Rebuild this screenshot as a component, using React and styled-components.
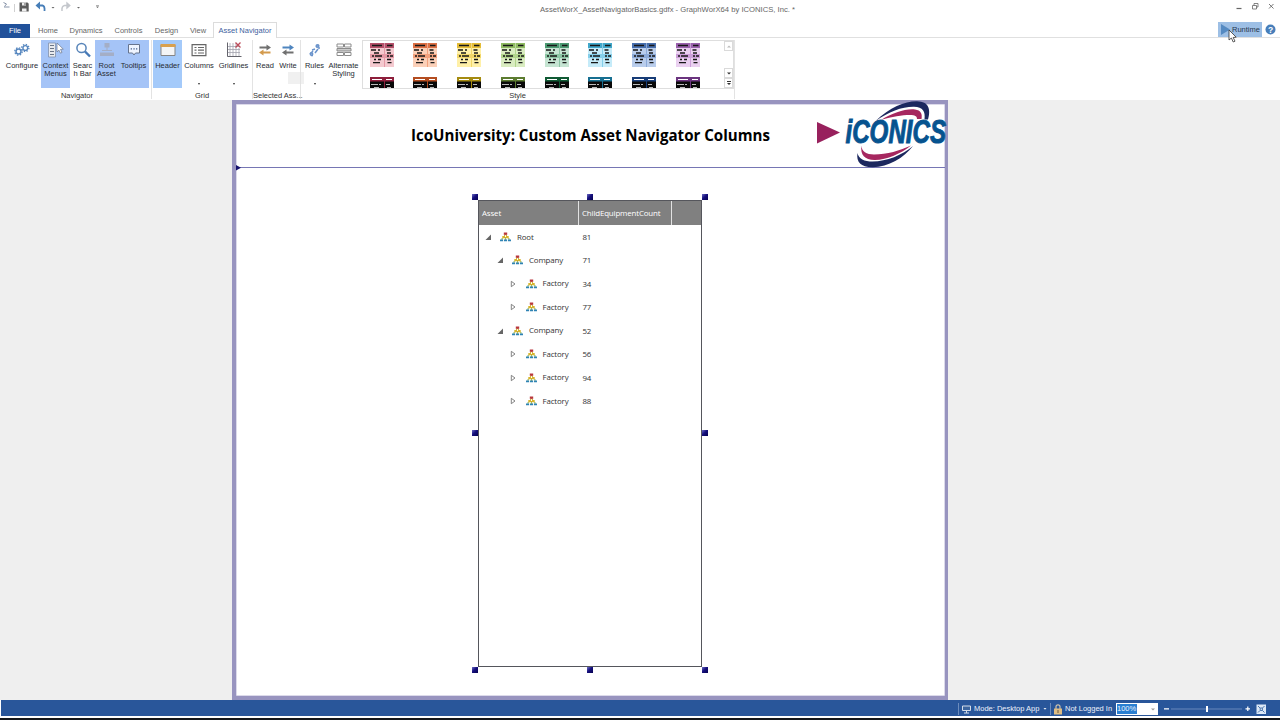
import React from "react";
import styled, { createGlobalStyle } from "styled-components";

const GlobalStyle = createGlobalStyle`
  * {
    box-sizing: border-box;
  }
  body {
    margin: 0;
    overflow: hidden;
    font-family: "Liberation Sans", Arial, sans-serif;
    font-size: 7.5px;
    color: #333;
  }
  svg {
    display: block;
    flex: none;
  }
`

const Window = styled.div`
  position: relative;
  width: 1280px;
  height: 720px;
  display: flex;
  flex-direction: column;
  background: #fff;
  border-bottom: 2px solid #15171b;
`

const TitleBar = styled.header`
  height: 22px;
  display: grid;
  grid-template-columns: 540px 1fr 48px;
`
const QuickAccess = styled.div`
  height: 14px;
`
const WindowTitle = styled.div`
  font-size: 7.67px;
  line-height: 19px;
  color: #666;
  white-space: nowrap;
`
const WindowButtons = styled.div`
  height: 14px;
`

const TabRow = styled.nav`
  height: 16px;
  display: flex;
  border-bottom: 1px solid #e0e0e0;
  line-height: 17px;
  white-space: nowrap;
`
const FileTab = styled.div`
  width: 30px;
  height: 14px;
  margin-top: 2px;
  background: #21519a;
  color: #fff;
  text-align: center;
  line-height: 14px;
`
const Tab = styled.div`
  width: ${({ $w }) => $w}px;
  text-align: center;
  color: #666;
`
const ActiveTab = styled(Tab)`
  height: 16px;
  margin-left: -1px;
  color: #3e62a0;
  background: #fff;
  border: 1px solid #dcdcdc;
  border-bottom: 0;
  line-height: 15px;
`
const RuntimeArea = styled.div`
  margin-left: auto;
  display: flex;
  gap: 3px;
  padding-right: 4px;
`
const RuntimeButton = styled.div`
  width: 44px;
  height: 15px;
  display: flex;
  align-items: center;
  gap: 2px;
  padding-left: 3px;
  background: #9dbfe5;
  color: #26364d;
  line-height: 15px;
`

const Ribbon = styled.section`
  height: 62px;
  display: flex;
  padding-top: 2px;
`
const Group = styled.div`
  width: ${({ $w }) => $w}px;
  height: 59px;
  border-right: 1px solid #e3e3e3;
  display: flex;
  flex-direction: column;
`
const GroupBody = styled.div`
  height: 48px;
  display: flex;
  padding-left: ${({ $pad }) => $pad || 0}px;
`
const GroupLabel = styled.div`
  margin-top: 3px;
  padding-left: ${({ $shift }) => $shift || 0}px;
  text-align: center;
  line-height: 10px;
  color: #333;
  white-space: nowrap;
`
const RibbonButton = styled.div`
  position: relative;
  width: ${({ $w }) => $w}px;
  height: 48px;
  flex: none;
  padding-top: 1px;
  display: flex;
  flex-direction: column;
  align-items: center;
  background: ${({ $on }) => $on || "transparent"};
`
const ButtonLabel = styled.div`
  margin-top: 3px;
  line-height: 8px;
  text-align: center;
  white-space: pre;
  color: #282c34;
`
const DropMark = styled.i`
  width: 0;
  margin-top: auto;
  margin-bottom: 3px;
  border: 1.5px solid transparent;
  border-top: 2px solid #333;
  border-bottom: 0;
`

const Gallery = styled.div`
  width: 372px;
  height: 49px;
  display: flex;
  border: 1px solid #dedede;
  overflow: hidden;
`
const Tiles = styled.div`
  width: 362px;
  height: 47px;
  display: grid;
  grid-template-columns: repeat(8, 43.75px);
  grid-template-rows: 34px 12px;
  padding: 2px 0 0 6.5px;
`
const ScrollColumn = styled.div`
  width: 9px;
  display: flex;
  flex-direction: column;
  justify-content: space-between;
`
const ScrollButton = styled.div`
  height: 10px;
  margin-top: ${({ $push }) => ($push ? "auto" : 0)};
  border: 1px solid #dadada;
  display: flex;
  align-items: center;
  justify-content: center;
`

const Workspace = styled.main`
  height: 600px;
  display: flex;
  padding-left: 232px;
  background: #efefef;
`
const Page = styled.div`
  position: relative;
  width: 716px;
  height: 600px;
  background: #fff;
  border: 4px solid #9894bf;
  border-right-width: 3px;
  box-shadow: inset 0 0 0 0.5px #b9b6d6;
`
const PageHeader = styled.div`
  height: 64px;
  border-bottom: 1px solid #7676b4;
  text-align: center;
  font: bold 15.1px/62px "Open Sans", "Noto Sans", sans-serif;
  color: #000;
`
const Logo = styled.svg`
  position: absolute;
  left: 576px;
  top: -7px;
  overflow: visible;
`
const LineStart = styled.svg`
  position: absolute;
  left: -1px;
  top: 60px;
`
const Navigator = styled.div`
  position: relative;
  width: 224px;
  height: 467px;
  margin: 32px 0 0 242px;
  border: 1px solid #55565c;
  font-family: "Open Sans", "Noto Sans", sans-serif;
  font-size: 7.9px;
  letter-spacing: -0.14px;
`
const HeaderRow = styled.div`
  height: 24px;
  display: grid;
  grid-template-columns: 100px 93px 1fr;
  background: #808080;
  line-height: 24px;
  color: #fff;
`
const HeaderCell = styled.div`
  padding-left: 3px;
  border-right: ${({ $last }) => ($last ? "0" : "1px solid #e2e2e2")};
`
const Row = styled.div`
  height: 23.48px;
  display: grid;
  grid-template-columns: 103.5px 1fr;
  line-height: 25px;
`
const TreeCell = styled.div`
  height: 24px;
  display: flex;
  align-items: center;
  padding-left: ${({ $level }) => [6, 18, 31][$level]}px;
`
const NodeIcon = styled.div`
  margin: 0 ${({ $level }) => [6, 6, 5.5][$level]}px 0 ${({ $level }) => [8, 8, 9][$level]}px;
`
const Handle = styled.i`
  position: absolute;
  left: ${({ $x }) => $x}px;
  top: ${({ $y }) => $y}px;
  width: 6px;
  height: 6px;
  background: linear-gradient(135deg, #6f6fc4 0%, #16107e 45%, #05004f 100%);
`

const StatusBar = styled.footer`
  height: 16px;
  margin-left: 1px;
  display: flex;
  align-items: center;
  padding: 2px 0 0 957px;
  background: #29569a;
  color: #edf2fa;
  line-height: 16px;
  white-space: nowrap;
`
const StatusItem = styled.div`
  width: ${({ $w }) => $w}px;
  height: 12px;
  display: flex;
  align-items: center;
  gap: 3px;
  padding-left: 3px;
  border-left: 1px solid #6c8cbd;
`
const ZoomBox = styled.div`
  width: 42px;
  height: 12px;
  display: flex;
  align-items: center;
  justify-content: space-between;
  padding: 0 3px 0 1px;
  background: #fff;
`
const ZoomValue = styled.span`
  height: 10px;
  width: 20px;
  line-height: 10px;
  background: #2a7fd2;
`
const SliderArea = styled.div`
  margin-left: 4px;
`
const Cursor = styled.svg`
  position: absolute;
  left: 1228px;
  top: 29px;
`
const Shade = styled.div`
  position: absolute;
  left: 288px;
  top: 72px;
  width: 16px;
  height: 12px;
  background: rgba(225, 225, 225, 0.5);
`

const palettes = [
  ["#b5506a", "#f4c9cf", "#e59aa6"],
  ["#dd7044", "#fbd0b8", "#f2a27e"],
  ["#e5bd38", "#fff0a8", "#f2d76a"],
  ["#8fbb62", "#d9ecc0", "#b1d48c"],
  ["#4b9a72", "#c5e4d2", "#8cc5a4"],
  ["#40a7ca", "#c5ebf9", "#85cfea"],
  ["#476fae", "#b9cdec", "#8caad8"],
  ["#9b62ae", "#ead0f0", "#cda0da"],
]
const darkHeads = ["#8e1f3c", "#b44d20", "#a58b10", "#5c7c30", "#105a34", "#176f91", "#173c77", "#6b347f"]

const rows = [
  { level: 0, name: "Root", count: 81, open: true },
  { level: 1, name: "Company", count: 71, open: true },
  { level: 2, name: "Factory", count: 34 },
  { level: 2, name: "Factory", count: 77 },
  { level: 1, name: "Company", count: 52, open: true },
  { level: 2, name: "Factory", count: 56 },
  { level: 2, name: "Factory", count: 94 },
  { level: 2, name: "Factory", count: 88 },
]

function LightTile({ colors: [head, body, band] }) {
  return (
    <svg width="24" height="24" viewBox="0 0 24 24">
      <path fill={body} d="M0 0h24v24H0z" />
      <path fill={head} d="M0 0h24v5H0z" />
      <path fill={band} d="M0 11h24v4H0zM14 5h1v19h-1z" />
      <path fill="#fff" opacity=".4" d="M14 0h1v5h-1z" />
      <path
        stroke="#171717"
        strokeWidth="1.300"
        d="M2 2.500h10M17 2.500h5.500M1 7h5M8 7h2M16.500 7h4M4 10h5M17 10h4M2 13h2M5 13h7M17 13h2M20 13h3M4 16.500h2M8 16.500h3M17 16.500h4M3 19.700h7M17.500 19.700h4"
      />
    </svg>
  )
}

function DarkTile({ head }) {
  return (
    <svg width="24" height="12" viewBox="0 0 24 12">
      <path fill="#090909" d="M0 0h24v12H0z" />
      <path fill={head} d="M0 0h24v4.500H0z" />
      <path stroke="#fff" strokeWidth="1.200" d="M2 2.500h10M16 2.500h6" />
      <path stroke="#bbb" strokeWidth="1" d="M1 7.500h7M9 7.500h2M16 7.500h4M4 10.500h5M17 10.500h4" />
      <path stroke={head} d="M14.500 0v12" />
    </svg>
  )
}

function TreeIcon() {
  return (
    <svg width="11" height="10" viewBox="0 0 11 10">
      <path stroke="#cfa92f" strokeWidth="1" fill="none" d="M5.500 2 2.500 7M5.500 2l3 5M5.500 5v3" />
      <path fill="#b8373e" d="M3.800 .5h3.400v2.300H3.800z" />
      <path fill="#d8b62c" d="M2.300 4h2.700v2H2.300zM6 4h2.700v2H6z" />
      <path fill="#8fbf77" d="M1 6.500h2v1H1zM4.500 6.500h2v1h-2zM8 6.500h2v1H8z" />
      <path fill="#2f83b4" d="M0 7.400h3.100v1.800H0zM4 7.400h3v1.800H4zM7.900 7.400H11v1.800H7.900z" />
    </svg>
  )
}

function Expander({ open }) {
  return (
    <svg width="7" height="8" viewBox="0 0 7 8">
      {open
        ? <path fill="#666" d="M6 1.500v5.500H.5z" />
        : <path fill="#fff" stroke="#777" strokeWidth=".9" d="M1.300 1.300v5.400L5 4z" />}
    </svg>
  )
}

// drawings of the ribbon buttons, all on an 18 x 18 grid
const icons = {
  configure: (
    <g fill="none" stroke="#5787bf">
      <circle cx="5.500" cy="10.500" r="2.500" strokeWidth="1.500" />
      <circle cx="5.500" cy="10.500" r="3.700" strokeWidth="1.300" strokeDasharray="1.450 1.450" />
      <circle cx="12.300" cy="7" r="2.400" strokeWidth="1.400" />
      <circle cx="12.300" cy="7" r="3.600" strokeWidth="1.300" strokeDasharray="1.410 1.410" />
    </g>
  ),
  context: (
    <g>
      <path fill="#e8eaee" stroke="#8292ad" strokeWidth=".8" d="M1.500 2h7v14h-7z" />
      <path stroke="#6b7587" strokeWidth="1" d="M3 4.500h4M3 7.500h4M3 10.500h4M3 13.500h4" />
      <path fill="#fff" stroke="#68748a" strokeWidth=".7" d="M10 2v9l2-1.800 1.500 3 1.500-.8-1.500-3 2.800-.3z" />
    </g>
  ),
  search: (
    <g fill="none" stroke="#4679b6">
      <circle cx="7.500" cy="7" r="4.600" stroke="#5784b9" strokeWidth="1.500" />
      <path strokeWidth="2.400" d="m11 10.500 5 5" />
    </g>
  ),
  root: (
    <g fill="#a4aec6">
      <path d="M6.500 2h5v4.500h-5zM8.500 6.500h1v3h-1zM4 9h10v1H4z" />
      <path d="M2 11.500h14v3.500H2z" />
    </g>
  ),
  tooltip: (
    <g>
      <path fill="#eef4ff" stroke="#66748e" strokeWidth="1" d="M3.500 3.500h11v8.500h-4l-1.500 2-1.500-2h-4z" />
      <path fill="#46618f" d="M5.700 7.200H7v1.300H5.700zM8.400 7.200h1.300v1.300H8.400zM11 7.200h1.300v1.300H11z" />
    </g>
  ),
  header: (
    <g>
      <path fill="#f4f5f6" stroke="#858585" strokeWidth="1" d="M2 4h14v10.500H2z" />
      <path fill="#d9a04e" d="M1.500 3h15v3h-15z" />
    </g>
  ),
  columns: (
    <g>
      <path fill="#fff" stroke="#666" strokeWidth="1.200" d="M2.100 3.600h13.800v11H2.100z" />
      <path stroke="#666" strokeWidth="1.200" d="M4.500 6.500h2M8 6.500h6M4.500 9.200h2M8 9.200h6M4.500 12h2M8 12h6" />
    </g>
  ),
  gridlines: (
    <g>
      <path stroke="#a2a2ad" strokeWidth=".8" d="M5 2v13M8 2v13M11 2v13M14 7v8M2 5.500h13M2 8.500h13M2 11.500h13" />
      <path fill="none" stroke="#64646c" strokeWidth="1" d="M2.500 1.500v14h14" />
      <path stroke="#bd4b59" strokeWidth="1.300" d="m10.500 1.500 5 5M15.500 1.500l-5 5" />
    </g>
  ),
  read: (
    <g>
      <path fill="#707070" d="M3.500 5.500h7V3.500l4.500 3-4.500 3V7.500h-7z" />
      <path fill="#d39a4d" d="M14.500 10.500h-7v-2l-4.500 3 4.500 3v-2h7z" />
    </g>
  ),
  write: (
    <g>
      <path fill="#4f85bf" d="M3.500 5.500h7V3.500l4.500 3-4.500 3V7.500h-7z" />
      <path fill="#707070" d="M14.500 10.500h-7v-2l-4.500 3 4.500 3v-2h7z" />
    </g>
  ),
  rules: (
    <g fill="none" stroke="#6a93cb" strokeWidth="1.500">
      <path d="m10 6 3-2M6 9l3-1M4 13l3-3M9 12l3-4M12 7h2M5 14.500h2" />
      <circle cx="11.500" cy="5" r="1.300" />
      <circle cx="5.500" cy="13" r="1.200" />
    </g>
  ),
  alternate: (
    <g fill="#fff" stroke="#8c8c8c" strokeWidth="1">
      <path d="M2 3h6.500v3H2zM9.500 3H16v3H9.500zM2 11.500h6.500v3H2zM9.500 11.500H16v3H9.500z" />
      <path fill="#ccc" d="M2 7.500h14v2.500H2z" />
    </g>
  ),
}

function Command({ icon, w, on, label, drop }) {
  return (
    <RibbonButton $w={w} $on={on}>
      <svg width="18" height="18" viewBox="0 0 18 18">{icons[icon]}</svg>
      <ButtonLabel>{label}</ButtonLabel>
      {drop && <DropMark />}
    </RibbonButton>
  )
}

function TitleArea() {
  return (
    <TitleBar>
      <QuickAccess>
        <svg width="110" height="14" viewBox="0 0 110 14">
          <path fill="none" stroke="#8793a8" strokeWidth="1" d="m3.500 2.500 3 1.500-2 2.500M4 7h5.500" />
          <path stroke="#d0d0d0" d="M14.500 4v8" />
          <path fill="#5a5a5a" d="M19.500 2.500h8l1.200 1.200V11.500h-9.200z" />
          <path fill="#eee" d="M22 2.500h4v3h-4zM22 8.500h4.500v3H22z" />
          <path fill="#5a5a5a" d="M24.500 3h1v2h-1z" />
          <path fill="none" stroke="#477eb8" strokeWidth="1.800" d="M38 5.500h4.500q2.500.5 2 5.500" />
          <path fill="#477eb8" d="m35.500 5.500 4.500-4v8z" />
          <path fill="#666" d="M51.500 7h3L53 8.500zM77 7h3l-1.500 1.500zM96 6.500h3L97.500 8zM96 5h3v.6h-3z" />
          <path fill="none" stroke="#c4c7cc" strokeWidth="1.500" d="M62 11q-.5-5 2.500-5.500H68" />
          <path fill="#c4c7cc" d="m70.800 5.500-4.500-4v8z" />
        </svg>
      </QuickAccess>
      <WindowTitle>AssetWorX_AssetNavigatorBasics.gdfx - GraphWorX64 by ICONICS, Inc. *</WindowTitle>
      <WindowButtons>
        <svg width="48" height="14" viewBox="0 0 48 14" fill="none" stroke="#666">
          <path strokeWidth="1.200" d="M4.500 8.500h5" />
          <path strokeWidth=".8" d="M20.500 5.500h4v3.500h-4zM22 5.500V3.500h4v3.500h-1.500" />
          <path strokeWidth=".9" d="m37 4 4.500 4.500M41.500 4 37 8.500" />
        </svg>
      </WindowButtons>
    </TitleBar>
  )
}

function Tabs() {
  return (
    <TabRow>
      <FileTab>File</FileTab>
      <Tab $w={36}>Home</Tab>
      <Tab $w={40}>Dynamics</Tab>
      <Tab $w={45}>Controls</Tab>
      <Tab $w={31}>Design</Tab>
      <Tab $w={32}>View</Tab>
      <ActiveTab $w={64}>Asset Navigator</ActiveTab>
      <RuntimeArea>
        <RuntimeButton>
          <svg width="9" height="11" viewBox="0 0 9 11"><path fill="#558ac2" d="M0 0v11l9-5.500z" /></svg>
          Runtime
        </RuntimeButton>
        <svg width="11" height="14" viewBox="0 0 11 14">
          <circle cx="5.500" cy="7.500" r="5" fill="#477eba" />
          <text x="5.500" y="10.500" textAnchor="middle" fontSize="8.500" fontWeight="bold" fill="#fff">?</text>
        </svg>
      </RuntimeArea>
    </TabRow>
  )
}

function RibbonArea() {
  return (
    <Ribbon>
      <Group $w={152}>
        <GroupBody $pad={3}>
          <Command w={38} icon="configure" label="Configure" />
          <Command w={29} on="#a5c4f7" icon="context" label={"Context\nMenus"} />
          <Command w={25} icon="search" label={"Searc\nh Bar"} />
          <Command w={23} on="#a5c4f7" icon="root" label={"Root\nAsset"} />
          <Command w={31} on="#a5c4f7" icon="tooltip" label="Tooltips" />
        </GroupBody>
        <GroupLabel $shift={3}>Navigator</GroupLabel>
      </Group>
      <Group $w={101}>
        <GroupBody $pad={1}>
          <Command w={29} on="#a4cafa" icon="header" label="Header" />
          <Command w={34} icon="columns" label="Columns" drop />
          <Command w={35} icon="gridlines" label="Gridlines" drop />
        </GroupBody>
        <GroupLabel>Grid</GroupLabel>
      </Group>
      <Group $w={48}>
        <GroupBody>
          <Command w={24} icon="read" label="Read" />
          <Command w={22} icon="write" label="Write" />
        </GroupBody>
        <GroupLabel>Selected Ass...</GroupLabel>
      </Group>
      <Group $w={434}>
        <GroupBody $pad={3}>
          <Command w={21} icon="rules" label="Rules" drop />
          <Command w={37} icon="alternate" label={"Alternate\nStyling"} />
          <Gallery>
            <Tiles>
              {palettes.map((colors) => <LightTile key={colors[0]} colors={colors} />)}
              {darkHeads.map((head) => <DarkTile key={head} head={head} />)}
            </Tiles>
            <ScrollColumn>
              <ScrollButton><svg width="4" height="3"><path fill="#bbb" d="M0 2.500h4L2 .5z" /></svg></ScrollButton>
              <ScrollButton $push><svg width="4" height="3"><path fill="#333" d="M0 .5h4L2 2.500z" /></svg></ScrollButton>
              <ScrollButton><svg width="4" height="5"><path fill="#333" d="M0 0h4v1H0zM0 2h4L2 4z" /></svg></ScrollButton>
            </ScrollColumn>
          </Gallery>
        </GroupBody>
        <GroupLabel>Style</GroupLabel>
      </Group>
    </Ribbon>
  )
}

function IconicsLogo() {
  return (
    <Logo width="136" height="72" viewBox="812 97 136 72">
      <path fill="#98215d" d="M817 122v21.500l23-11z" />
      <path fill="#1c285f" d="M875.500 121C890 107 905 101 917 101.200c12 .3 14 8.300 11 18.300h-3.500c1-8-1.500-12.500-10.500-12.700-12-.2-25 5-38.500 14.200z" />
      <path fill="#a6275f" d="M881 120c12-7 24-11.500 34-10.500 6 .8 7.500 4.500 6.500 9.500h-4.500c0-3-2-4-7-4-8 0-18 1.500-29 5z" />
      <path fill="#a6275f" d="M861.500 145.500c0 6 5 9 12.500 9 13 0 26-4 37-9-10 8-24 14.500-36 14.500-10 .2-15-5-13.500-14.500z" />
      <path fill="#1c285f" d="M857.500 153c1 6 7 8.500 15 8.500 14 0 30-6.500 40.500-15.500-9 12-25 21-40 21.300-12 .2-17-5.300-15.500-14.300z" />
      <text
        x="845.500"
        y="142.800"
        textLength="100.500"
        lengthAdjust="spacingAndGlyphs"
        fontFamily="Liberation Sans, Arial, sans-serif"
        fontSize="34"
        fontWeight="bold"
        fontStyle="italic"
        fill="#06538f"
        stroke="#06538f"
        strokeWidth="1"
      >
        iCONICS
      </text>
    </Logo>
  )
}

function AssetNavigator() {
  return (
    <Navigator>
      <HeaderRow>
        <HeaderCell>Asset</HeaderCell>
        <HeaderCell>ChildEquipmentCount</HeaderCell>
        <HeaderCell $last />
      </HeaderRow>
      {rows.map((row, i) => (
        <Row key={i}>
          <TreeCell $level={row.level}>
            <Expander open={row.open} />
            <NodeIcon $level={row.level}><TreeIcon /></NodeIcon>
            {row.name}
          </TreeCell>
          <div>{row.count}</div>
        </Row>
      ))}
      {[-7, 229, 466].map((y) =>
        [-7, 108, 223].map((x) => (x === 108 && y === 229 ? null : <Handle key={`${x}${y}`} $x={x} $y={y} />))
      )}
    </Navigator>
  )
}

function Status() {
  return (
    <StatusBar>
      <StatusItem $w={92}>
        <svg width="9" height="9" viewBox="0 0 9 9">
          <path fill="#3c659f" stroke="#d4dce8" d="M.5 1h8v4.500h-8z" />
          <path fill="#d4dce8" d="M4 6h1v1.500h2v1H2v-1h2z" />
        </svg>
        Mode: Desktop App
        <svg width="5" height="4"><path fill="#e5ebf5" d="M1.500 1h3L3 2.800z" /></svg>
      </StatusItem>
      <StatusItem $w={66}>
        <svg width="8" height="11" viewBox="0 0 8 11">
          <path fill="none" stroke="#d0c4ac" strokeWidth="1.200" d="M2 5V2.800q0-2 2-2t2 2V5" />
          <path fill="#dfbd83" d="M0 4.500h8v6H0z" />
          <path fill="#6d5a3e" d="M3.500 6h1v3h-1z" />
        </svg>
        Not Logged In
      </StatusItem>
      <ZoomBox>
        <ZoomValue>100%</ZoomValue>
        <svg width="4" height="3"><path fill="#999" d="M0 .5h4L2 2.500z" /></svg>
      </ZoomBox>
      <SliderArea>
        <svg width="108" height="14" viewBox="0 0 108 14">
          <path stroke="#7896c4" strokeWidth=".8" d="M9 7h71" />
          <path stroke="#fff" strokeWidth="1.200" d="M2 6.800h5M83.500 6.800h4.500M85.800 4.500V9" />
          <path fill="#fff" d="M44 4h2v6h-2z" />
          <path fill="#dce8f6" d="M94.500 2.500h9.500v9.500h-9.500z" />
          <path stroke="#4d77ae" strokeWidth="1" fill="none" d="m96 4 2 2M102.500 4l-2 2M96 10.500l2-2M102.500 10.500l-2-2M98.200 6h2.200v2.500h-2.200z" />
        </svg>
      </SliderArea>
    </StatusBar>
  )
}

export default function App() {
  return (
    <>
      <GlobalStyle />
      <Window>
        <TitleArea />
        <Tabs />
        <RibbonArea />
        <Workspace>
          <Page>
            <PageHeader>IcoUniversity: Custom Asset Navigator Columns</PageHeader>
            <LineStart width="6" height="7"><path fill="#15116d" d="M1 1v5.500L6 3.700z" /></LineStart>
            <IconicsLogo />
            <AssetNavigator />
          </Page>
        </Workspace>
        <Status />
        <Shade />
        <Cursor width="10" height="14" viewBox="0 0 10 14">
          <path fill="#fff" stroke="#333" strokeWidth=".8" d="M1 1v10l2.400-2 1.800 4 1.800-.8-1.800-3.700 3-.3z" />
        </Cursor>
      </Window>
    </>
  )
}
